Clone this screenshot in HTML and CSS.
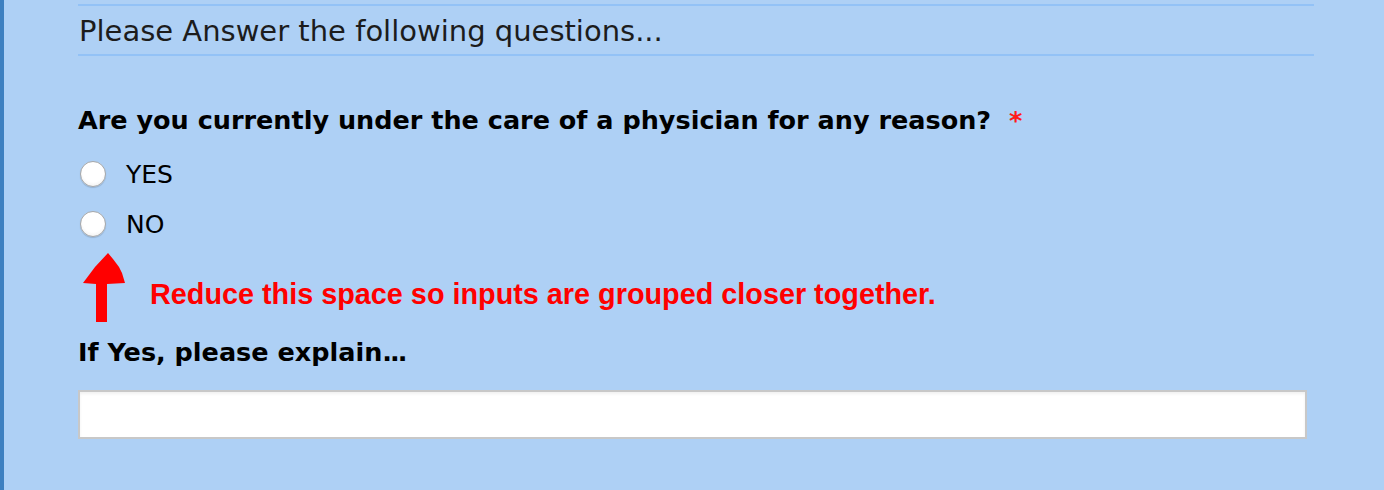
FILE: index.html
```
<!DOCTYPE html>
<html>
<head>
<meta charset="utf-8">
<link rel="stylesheet" href="styles.css">
</head>
<body>
<div class="page">
  <div class="form">
    <div class="section-head">Please Answer the following questions...</div>
    <div class="question">
      <div class="q-label">Are you currently under the care of a physician for any reason? <span class="req">*</span></div>
      <div class="options">
        <label class="opt"><span class="radio"></span><span class="opt-text">YES</span></label>
        <label class="opt"><span class="radio"></span><span class="opt-text">NO</span></label>
      </div>
    </div>
    <div class="note">
      <svg class="arrow" width="43" height="69" viewBox="0 0 43 69">
        <polygon fill="#ff0000" points="25,0 30,6 36,14 39,20 42,30 24,31 24,69 13,69 13,31 0,30 12,14"/>
      </svg>
      <span class="note-text">Reduce this space so inputs are grouped closer together.</span>
    </div>
    <div class="question explain">
      <div class="q-label">If Yes, please explain<span class="dots">...</span></div>
      <div class="textbox"></div>
    </div>
  </div>
</div>
</body>
</html>
```

FILE: styles.css
```
html, body {
  margin: 0;
  padding: 0;
  height: 100%;
}
body {
  background: #aed0f5;
  font-family: "DejaVu Sans", Verdana, sans-serif;
  color: #111;
  overflow: hidden;
}
.page {
  height: 100%;
  border-left: 4px solid #3e80c0;
  box-sizing: border-box;
  padding-left: 74px;
  padding-top: 4px;
}
.form {
  width: 1236px;
}
.section-head {
  border-top: 2px solid #93c2f6;
  border-bottom: 2px solid #93c2f6;
  height: 48px;
  font-size: 29px;
  line-height: 50px;
  padding-left: 1px;
  color: #1c1c1c;
  white-space: nowrap;
}
.q-label {
  font-weight: bold;
  font-size: 25.5px;
  margin-top: 49px;
  line-height: 30px;
  color: #000;
  white-space: nowrap;
}
.req {
  color: #ff1a1a;
  margin-left: 9px;
}
.dots {
  letter-spacing: -2px;
}
.options {
  padding-top: 14px;
}
.opt {
  display: flex;
  align-items: center;
  height: 50px;
  margin-left: 2px;
}
.radio {
  width: 24px;
  height: 24px;
  border-radius: 50%;
  border: 1px solid #a8a8a8;
  background: radial-gradient(circle at 50% 40%, #ffffff 55%, #e8e8e8 100%);
  box-shadow: 0 1px 1px rgba(0,0,0,0.15);
}
.opt-text {
  margin-left: 20px;
  font-size: 25px;
  color: #000;
}
.note {
  display: flex;
  align-items: flex-start;
  height: 73px;
}
.arrow {
  display: block;
  margin-left: 5px;
  margin-top: 4px;
}
.note-text {
  font-family: "Liberation Sans", Arial, sans-serif;
  font-weight: bold;
  font-size: 28.8px;
  line-height: 33px;
  color: #ff0000;
  margin-left: 24px;
  margin-top: 29px;
  white-space: nowrap;
}
.explain .q-label {
  margin-top: 15px;
}
.textbox {
  margin-top: 23px;
  width: 1225px;
  height: 45px;
  background: #fff;
  border: 2px solid #c8c8c8;
  box-shadow: inset 0 2px 3px rgba(0,0,0,0.06);
}
```
